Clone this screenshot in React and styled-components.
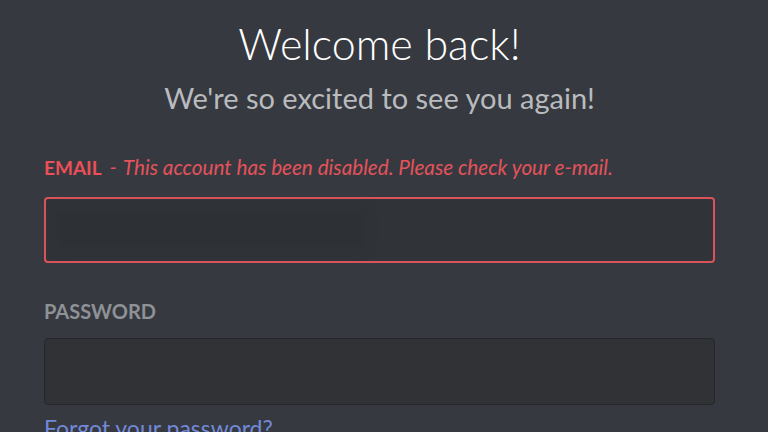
import React from 'react'
import styled, { createGlobalStyle } from 'styled-components'

const Global = createGlobalStyle`
  html, body { margin: 0; padding: 0; background: #36393f; }
  body { width: 768px; height: 432px; overflow: hidden; font-family: Lato, "Open Sans", sans-serif; }
`

const Page = styled.div`
  width: 768px;
  height: 432px;
  box-sizing: border-box;
  padding: 18px 53px 0 44px;
  background: #36393f;
`

const Title = styled.h1`
  margin: 0;
  text-align: center;
  font-weight: 300;
  font-size: 43px;
  line-height: 52px;
  color: #ffffff;
`

const Subtitle = styled.div`
  margin-top: 10px;
  text-align: center;
  font-size: 29px;
  line-height: 36px;
  color: #b9bbbe;
`

const Field = styled.div`
  margin-top: ${p => p.$top}px;
`

const Label = styled.div`
  font-size: ${p => (p.$error ? 19 : 20)}px;
  line-height: 24px;
  font-weight: 700;
  color: ${p => (p.$error ? '#ec4f57' : '#8e9297')};
  white-space: nowrap;
`

const ErrorText = styled.span`
  margin-left: 8px;
  font-size: 20.7px;
  font-weight: 400;
  font-style: italic;
  color: #e4535b;
`

const Dash = styled.span`
  margin-right: 6px;
`

const Input = styled.div`
  position: relative;
  margin-top: ${p => (p.$error ? 17 : 15)}px;
  height: ${p => (p.$error ? 62 : 65)}px;
  border-radius: 4px;
  background: ${p => (p.$error ? '#303338' : '#303235')};
  border: ${p => (p.$error ? '2px solid #d9535b' : '1px solid #25272b')};
`

/* blurred, redacted address inside the email box */
const Redacted = styled.div`
  position: absolute;
  left: 12px;
  top: 12px;
  width: 306px;
  height: 36px;
  background: #2d3035;
  filter: blur(6px);
`

const Forgot = styled.a`
  display: block;
  margin-top: 9px;
  font-size: 23px;
  line-height: 28px;
  color: #7289da;
  text-decoration: none;
`

export default function App() {
  return (
    <Page>
      <Global />
      <Title>Welcome back!</Title>
      <Subtitle>We're so excited to see you again!</Subtitle>
      <Field $top={39}>
        <Label $error>
          EMAIL
          <ErrorText>
            <Dash>-</Dash>This account has been disabled. Please check your e-mail.
          </ErrorText>
        </Label>
        <Input $error>
          <Redacted />
        </Input>
      </Field>
      <Field $top={36}>
        <Label>PASSWORD</Label>
        <Input />
      </Field>
      <Forgot href="#">Forgot your password?</Forgot>
    </Page>
  )
}
